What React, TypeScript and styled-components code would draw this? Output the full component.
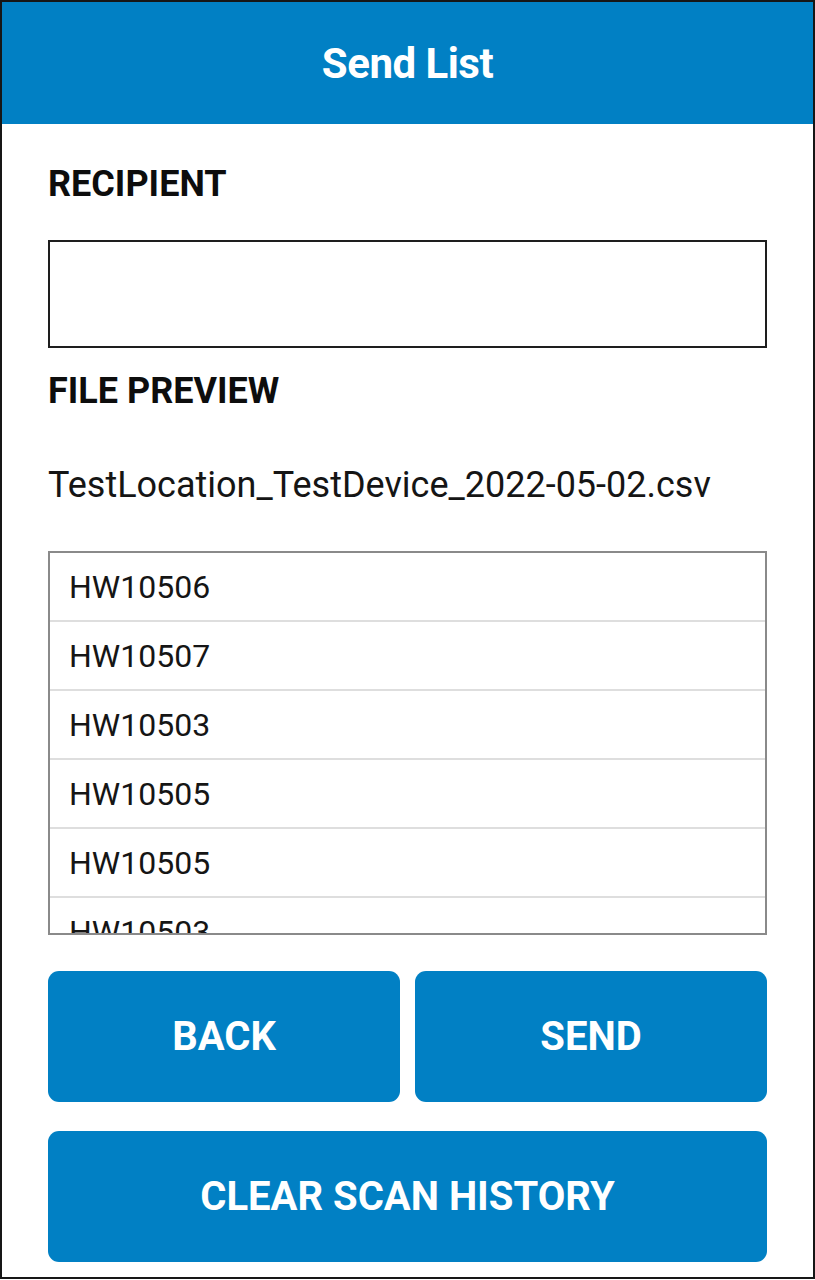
import React from 'react'
import styled, { createGlobalStyle } from 'styled-components'

const GlobalStyle = createGlobalStyle`
  html, body {
    margin: 0;
    padding: 0;
    background: #ffffff;
  }

  body {
    font-family: Roboto, 'Noto Sans', 'Liberation Sans', sans-serif;
    color: #111111;
  }
`

const BLUE = '#0180c4'

const Screen = styled.div`
  box-sizing: border-box;
  width: 815px;
  height: 1279px;
  border: 2px solid #161616;
  display: flex;
  flex-direction: column;
  background: #ffffff;
  overflow: hidden;
`

const Header = styled.header`
  height: 122px;
  flex-shrink: 0;
  display: flex;
  align-items: center;
  justify-content: center;
  background: ${BLUE};
  color: #ffffff;
  font-size: 42px;
  font-weight: 700;
  letter-spacing: -0.5px;
`

const Body = styled.main`
  display: flex;
  flex-direction: column;
  padding: 0 46px;
`

const Label = styled.h2<{ $top: number }>`
  margin: ${({ $top }) => $top}px 0 0;
  font-size: 36px;
  line-height: 40px;
  font-weight: 700;
  color: #0d0d0d;
`

const RecipientInput = styled.input`
  box-sizing: border-box;
  margin-top: 36px;
  width: 100%;
  height: 108px;
  border: 2px solid #1e1e1e;
  border-radius: 0;
  outline: none;
  padding: 0 20px;
  font-family: inherit;
  font-size: 32px;
  background: #ffffff;
`

const FileName = styled.div`
  margin-top: 53px;
  font-size: 36px;
  line-height: 42px;
  color: #151515;
`

const PreviewList = styled.ul`
  box-sizing: border-box;
  margin: 45px 0 0;
  padding: 0;
  list-style: none;
  height: 384px;
  border: 2px solid #8a8a8a;
  overflow: hidden;
`

const Row = styled.li`
  box-sizing: border-box;
  height: 69px;
  display: flex;
  align-items: center;
  padding: 0 19px;
  font-size: 32px;
  color: #151515;
  border-bottom: 2px solid #dedede;
`

const ButtonRow = styled.div`
  display: grid;
  grid-template-columns: 1fr 1fr;
  gap: 15px;
  margin-top: 36px;
`

const ActionButton = styled.button<{ $top?: number }>`
  height: 131px;
  margin-top: ${({ $top = 0 }) => $top}px;
  border: none;
  border-radius: 11px;
  background: ${BLUE};
  color: #ffffff;
  font-family: inherit;
  font-size: 40px;
  font-weight: 700;
  cursor: pointer;
`

const codes = ['HW10506', 'HW10507', 'HW10503', 'HW10505', 'HW10505', 'HW10503']

const App = () => {
  return (
    <>
      <GlobalStyle />
      <Screen>
        <Header>Send List</Header>
        <Body>
          <Label $top={40}>RECIPIENT</Label>
          <RecipientInput type="text" />
          <Label $top={23}>FILE PREVIEW</Label>
          <FileName>TestLocation_TestDevice_2022-05-02.csv</FileName>
          <PreviewList>
            {codes.map((code, i) => (
              <Row key={i}>{code}</Row>
            ))}
          </PreviewList>
          <ButtonRow>
            <ActionButton>BACK</ActionButton>
            <ActionButton>SEND</ActionButton>
          </ButtonRow>
          <ActionButton $top={29}>CLEAR SCAN HISTORY</ActionButton>
        </Body>
      </Screen>
    </>
  )
}

export default App
